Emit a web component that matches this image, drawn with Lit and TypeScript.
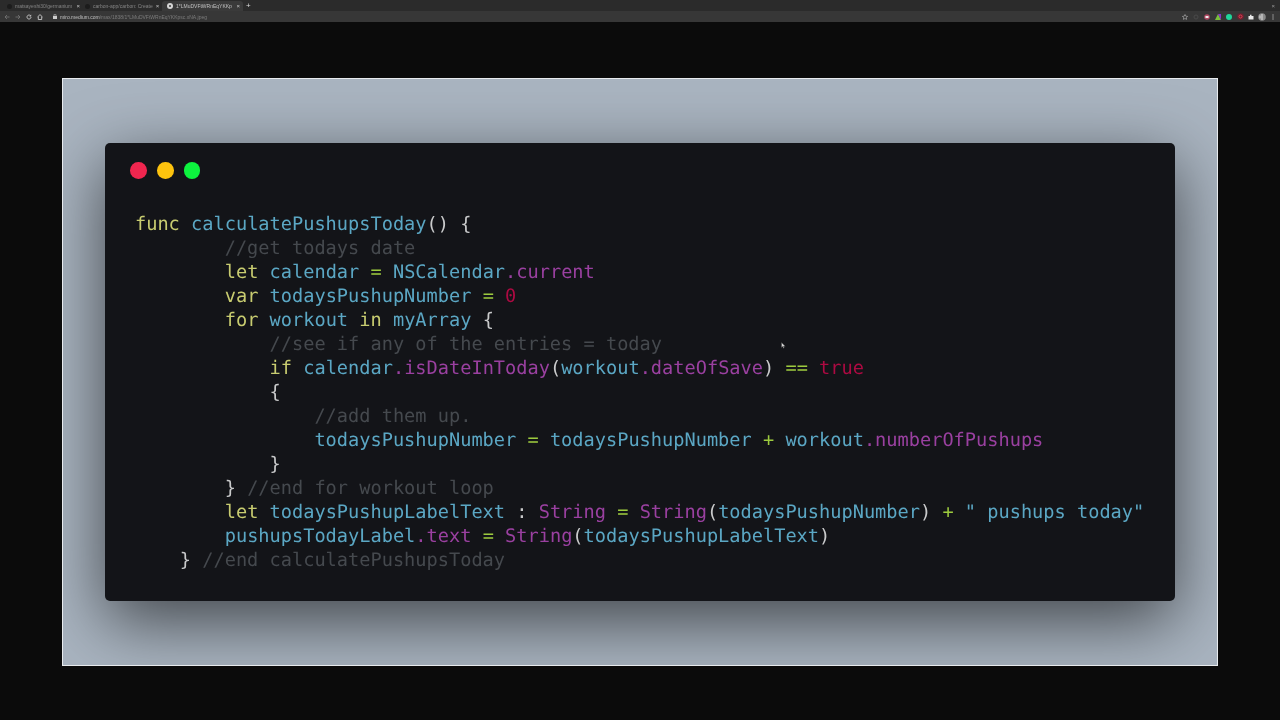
import { LitElement, html, css, svg } from "lit";
import { customElement } from "lit/decorators.js";

type Tok = [string, string];
const K = "k", I = "i", P = "p", O = "o", N = "n", C = "c", W = "w";
const LINES: Tok[][] = [
  [[K, "func"], [W, " "], [I, "calculatePushupsToday"], [W, "() {"]],
  [[C, "        //get todays date"]],
  [[W, "        "], [K, "let"], [W, " "], [I, "calendar"], [W, " "], [O, "="], [W, " "], [I, "NSCalendar"], [P, ".current"]],
  [[W, "        "], [K, "var"], [W, " "], [I, "todaysPushupNumber"], [W, " "], [O, "="], [W, " "], [N, "0"]],
  [[W, "        "], [K, "for"], [W, " "], [I, "workout"], [W, " "], [K, "in"], [W, " "], [I, "myArray"], [W, " {"]],
  [[C, "            //see if any of the entries = today"]],
  [[W, "            "], [K, "if"], [W, " "], [I, "calendar"], [P, ".isDateInToday"], [W, "("], [I, "workout"], [P, ".dateOfSave"], [W, ") "], [O, "=="], [W, " "], [N, "true"]],
  [[W, "            {"]],
  [[C, "                //add them up."]],
  [[W, "                "], [I, "todaysPushupNumber"], [W, " "], [O, "="], [W, " "], [I, "todaysPushupNumber"], [W, " "], [O, "+"], [W, " "], [I, "workout"], [P, ".numberOfPushups"]],
  [[W, "            }"]],
  [[W, "        } "], [C, "//end for workout loop"]],
  [[W, "        "], [K, "let"], [W, " "], [I, "todaysPushupLabelText"], [W, " : "], [P, "String"], [W, " "], [O, "="], [W, " "], [P, "String"], [W, "("], [I, "todaysPushupNumber"], [W, ") "], [O, "+"], [W, " "], [I, '" pushups today"']],
  [[W, "        "], [I, "pushupsTodayLabel"], [P, ".text"], [W, " "], [O, "="], [W, " "], [P, "String"], [W, "("], [I, "todaysPushupLabelText"], [W, ")"]],
  [[W, "    } "], [C, "//end calculatePushupsToday"]],
];

@customElement("app-root")
export class AppRoot extends LitElement {
  static styles = css`
    :host { display: block; position: relative; width: 1280px; height: 720px; overflow: hidden; background: #0b0b0b; font-family: "Liberation Sans", sans-serif; }
    .chrome { filter: blur(.4px); }
    .tabs { height: 11px; background: #2b2b2b; display: flex; align-items: flex-end; padding-left: 5px; box-sizing: border-box; }
    .tab { width: 78px; height: 10px; display: flex; align-items: center; gap: 3px; padding: 0 3px 0 2px; box-sizing: border-box; color: #858585; font-size: 5px; white-space: nowrap; }
    .tab.on { background: #3a3a3a; color: #c0c0c0; border-radius: 3px 3px 0 0; width: 81px; margin-left: 1px; padding-left: 5px; }
    .tab span { flex: 1; }
    .fav { width: 5px; height: 5px; border-radius: 50%; background: #1c1c1c; flex: none; }
    .x { color: #c4c4c4; font-size: 6px; font-style: normal; flex: none; }
    .plus { color: #ddd; font-size: 8px; line-height: 10px; margin-left: 3px; }
    .spacer { flex: 1; }
    .close { color: #999; font-size: 6px; margin-right: 5px; line-height: 10px; }
    .bar { height: 11px; background: #373737; display: flex; align-items: center; padding: 0 3px 0 4px; box-sizing: border-box; gap: 5px; }
    .bar svg { display: block; flex: none; }
    .url { display: flex; align-items: center; gap: 3px; font-size: 5px; color: #7c7c7c; margin-left: 5px; flex: 1; white-space: nowrap; }
    .url b { color: #c0c0c0; font-weight: 400; }
    .ext { display: flex; align-items: center; gap: 3px; }
    .cell { width: 8px; display: flex; justify-content: center; }
    .shot {
      margin: 56px 0 0 62px; width: 1156px; height: 588px; box-sizing: border-box;
      border: 1px solid #e8ebee; background: #a9b4c0; padding: 64px 0 0 42px; overflow: hidden;
    }
    .card {
      width: 1070px; height: 458px; background: #131418; border-radius: 5px; box-sizing: border-box;
      box-shadow: 0 20px 68px rgba(0,0,0,.62); padding: 19px 0 0 25.300px;
    }
    .dots { display: flex; gap: 10px; height: 17px; }
    .dot { width: 16.700px; height: 16.700px; border-radius: 50%; }
    .r { background: #f0264f; } .y { background: #fdc30e; } .g { background: #0df23e; }
    pre {
      margin: 33px 0 0 4.700px; font-family: "DejaVu Sans Mono", monospace; font-size: 18.640px; line-height: 24px;
      color: #c9cacb; filter: blur(.3px); text-rendering: geometricPrecision; font-variant-ligatures: none; padding-top: 1px;
    }
    .k { color: #c8cc70; } .i { color: #5ba7c4; } .p { color: #9a40a0; } .o { color: #9dcb3e; }
    .n { color: #ad0a42; } .c { color: #45494e; } .w { color: #c9cacb; }
    .cursor { position: absolute; left: 781px; top: 342px; }
  `;

  render() {
    return html`
      <div class="chrome">
      <div class="tabs">
        <div class="tab"><i class="fav"></i><span>matsayeshi30/germanium</span><i class="x">×</i></div>
        <div class="tab"><i class="fav"></i><span>carbon-app/carbon: Create</span><i class="x">×</i></div>
        <div class="tab on">
          <svg width="6" height="6" viewBox="0 0 6 6"><circle cx="3" cy="3" r="3" fill="#d5d5d5"/><circle cx="3" cy="3" r="1" fill="#3a3a3a"/></svg>
          <span>1*LMuDVFtWRnEqYKKp</span><i class="x">×</i>
        </div>
        <div class="plus">+</div>
        <div class="spacer"></div>
        <div class="close">×</div>
      </div>
      <div class="bar">
        <svg width="6" height="6" viewBox="0 0 6 6"><path d="M5.500 3H1M3 1 1 3l2 2" stroke="#777" fill="none" stroke-width=".8"/></svg>
        <svg width="6" height="6" viewBox="0 0 6 6"><path d="M.5 3H5M3 1l2 2-2 2" stroke="#777" fill="none" stroke-width=".8"/></svg>
        <svg width="6" height="6" viewBox="0 0 6 6"><path d="M5 3a2 2 0 1 1-.6-1.400" stroke="#ccc" fill="none" stroke-width=".9"/><path d="M5.200.6v2H3.200z" fill="#ccc"/></svg>
        <svg width="6" height="6" viewBox="0 0 6 6"><path d="M.5 3 3 .6 5.500 3M1.300 2.600V5.500h3.400V2.600" stroke="#ddd" fill="none" stroke-width=".8"/></svg>
        <div class="url">
          <svg width="4" height="5" viewBox="0 0 4 5"><rect y="2" width="4" height="3" fill="#ccc"/><path d="M1 2V1a1 1 0 0 1 2 0v1" stroke="#ccc" fill="none" stroke-width=".6"/></svg>
          <div><b>miro.medium.com</b>/max/1838/1*LMuDVFtWRnEqYKKpsc.xNA.jpeg</div>
        </div>
        <div class="ext">
          <div class="cell"><svg width="6" height="6" viewBox="0 0 6 6"><path d="M3 .5l.8 1.700 1.800.2-1.300 1.200.3 1.800L3 4.500l-1.600.9.300-1.800L.4 2.400l1.800-.2z" stroke="#bbb" fill="none" stroke-width=".6"/></svg></div>
          <div class="cell"><svg width="6" height="6" viewBox="0 0 6 6"><circle cx="3" cy="3" r="2" stroke="#4a4a4a" fill="none"/></svg></div>
          <div class="cell"><svg width="6" height="6" viewBox="0 0 6 6"><circle cx="3" cy="3" r="2.800" fill="#b04a63"/><rect x="1.500" y="2" width="3" height="2" fill="#eee"/></svg></div>
          <div class="cell"><svg width="6" height="6" viewBox="0 0 6 6"><path d="M0 6 3 0l3 6z" fill="#7bbf3c"/><path d="M3 0h3v6z" fill="#8a34c9"/></svg></div>
          <div class="cell"><svg width="6" height="6" viewBox="0 0 6 6"><circle cx="3" cy="3" r="3" fill="#1fd79a"/></svg></div>
          <div class="cell"><svg width="7" height="7" viewBox="0 0 7 7"><circle cx="3.500" cy="3.500" r="3.300" fill="#6b2030"/><circle cx="3.500" cy="3.500" r="1.500" fill="none" stroke="#e04050"/></svg></div>
          <div class="cell"><svg width="6" height="6" viewBox="0 0 6 6"><path d="M.5 2h1.500V.8h1.500V2H5.500v3.500H.5z" fill="#e8e8e8"/></svg></div>
          <div class="cell"><svg width="8" height="8" viewBox="0 0 8 8"><circle cx="4" cy="4" r="3.800" fill="#8a8a8a"/><path d="M4 1v6M2 2.500v3" stroke="#e0e0e0"/></svg></div>
          <div class="cell"><svg width="2" height="6" viewBox="0 0 2 6"><path d="M1 .5v1M1 2.500v1M1 4.500v1" stroke="#ddd"/></svg></div>
        </div>
      </div>
      </div>
      <div class="shot">
        <div class="card">
          <div class="dots"><div class="dot r"></div><div class="dot y"></div><div class="dot g"></div></div>
          <pre>${LINES.map((l) => html`<div>${l.map(([c, t]) => html`<span class=${c}>${t}</span>`)}</div>`)}</pre>
        </div>
      </div>
      <svg class="cursor" width="5" height="7" viewBox="0 0 5 7">${svg`<path d="M.5.500v5l1.200-1 .8 1.800.8-.4-.8-1.700H4.300z" fill="#d5d5d5" stroke="#333" stroke-width=".4"/>`}</svg>
    `;
  }
}
